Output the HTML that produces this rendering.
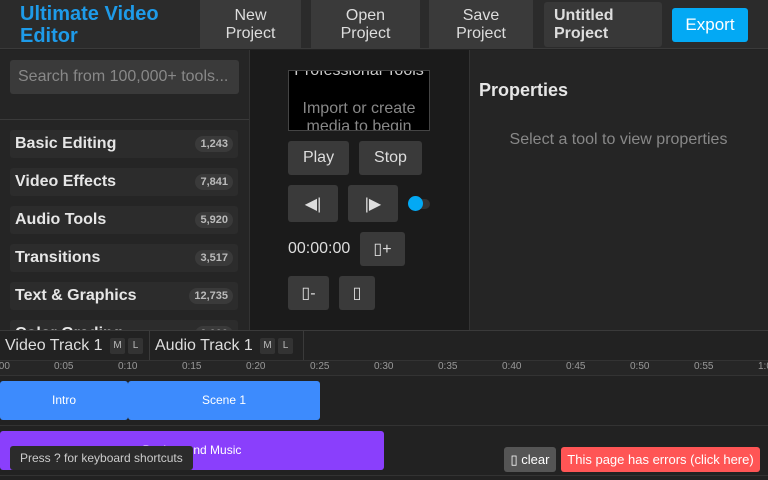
<!DOCTYPE html>
<html><head><style>
*{box-sizing:border-box;margin:0;padding:0}
body{width:768px;height:480px;overflow:hidden;background:#222;font-family:"Liberation Sans",sans-serif;color:#ddd;position:relative}
.a{position:absolute}
.hb{background:#3a3a3a;color:#ddd;font-size:16px;text-align:center;line-height:18px;display:flex;align-items:center;justify-content:center}
.cat{position:absolute;left:10px;width:228px;height:28px;background:#2c2c2c;border-radius:3px;font-weight:bold;font-size:16px;color:#e6e6e6;padding-left:5px;line-height:28px}
.cat span{position:absolute;right:5px;top:6px;height:16px;line-height:16px;font-size:11px;background:#3a3a3a;color:#bbb;border-radius:8px;padding:0 5px;font-weight:bold}
.btn{position:absolute;background:#3a3a3a;border-radius:3px;color:#ddd;font-size:16px;display:flex;align-items:center;justify-content:center}
.tk{position:absolute;top:361px;font-size:10px;color:#999}
.ml{position:absolute;top:7px;width:15px;height:16px;background:#333;font-size:10px;line-height:16px;text-align:center;color:#bbb;border-radius:2px}
</style></head><body>
<div class="a" style="left:0;top:0;width:768px;height:49px;background:#2b2b2b;border-bottom:1px solid #3a3a3a"></div>
<div class="a" style="left:20px;top:3px;font-size:20px;font-weight:bold;color:#1e9be9;line-height:22px">Ultimate Video<br>Editor</div>
<div class="a hb" style="left:200px;top:0;width:101px;height:49px">New<br>Project</div>
<div class="a hb" style="left:311px;top:0;width:109px;height:49px">Open<br>Project</div>
<div class="a hb" style="left:429px;top:0;width:104px;height:49px">Save<br>Project</div>
<div class="a" style="left:544px;top:2px;width:118px;height:45px;background:#383838;border-radius:3px;font-weight:bold;font-size:16px;line-height:18px;padding:5px 10px;color:#ddd">Untitled<br>Project</div>
<div class="a" style="left:672px;top:8px;width:76px;height:34px;background:#03a9f4;border-radius:3px;color:#fff;font-size:17px;line-height:34px;text-align:center">Export</div>

<div class="a" style="left:0;top:50px;width:250px;height:280px;background:#252525;border-right:1px solid #333"></div>
<div class="a" style="left:10px;top:60px;width:229px;height:34px;background:#3a3a3a;border-radius:3px;color:#888;font-size:16px;line-height:34px;padding-left:8px">Search from 100,000+ tools...</div>
<div class="a" style="left:0;top:119px;width:249px;height:1px;background:#3a3a3a"></div>
<div class="a" style="left:0;top:120px;width:249px;height:210px;overflow:hidden">
<div class="cat" style="top:10px">Basic Editing<span>1,243</span></div>
<div class="cat" style="top:48px">Video Effects<span>7,841</span></div>
<div class="cat" style="top:86px">Audio Tools<span>5,920</span></div>
<div class="cat" style="top:124px">Transitions<span>3,517</span></div>
<div class="cat" style="top:162px">Text &amp; Graphics<span>12,735</span></div>
<div class="cat" style="top:200px">Color Grading<span>9,000</span></div>
</div>

<div class="a" style="left:250px;top:50px;width:219px;height:280px;background:#1b1b1b"></div>
<div class="a" style="left:288px;top:70px;width:142px;height:61px;background:#000;border:1px solid #444;overflow:hidden;text-align:center;color:#888;font-size:16px;line-height:18px">
<div style="margin-top:-9px;color:#ccc">Professional Tools</div><div style="margin-top:20px">Import or create<br>media to begin</div></div>
<div class="btn" style="left:288px;top:141px;width:61px;height:34px">Play</div>
<div class="btn" style="left:359px;top:141px;width:63px;height:34px">Stop</div>
<div class="btn" style="left:288px;top:185px;width:50px;height:37px">◀|</div>
<div class="btn" style="left:348px;top:185px;width:50px;height:37px">|▶</div>
<div class="a" style="left:412px;top:199px;width:18px;height:10px;background:#333;border-radius:5px"></div>
<div class="a" style="left:408px;top:196px;width:15px;height:15px;background:#03a9f4;border-radius:50%"></div>
<div class="a" style="left:288px;top:240px;font-size:16px;color:#ddd">00:00:00</div>
<div class="btn" style="left:360px;top:232px;width:45px;height:34px">▯+</div>
<div class="btn" style="left:288px;top:276px;width:41px;height:34px">▯-</div>
<div class="btn" style="left:339px;top:276px;width:36px;height:34px">▯</div>

<div class="a" style="left:469px;top:50px;width:299px;height:280px;background:#252525;border-left:1px solid #333"></div>
<div class="a" style="left:479px;top:80px;font-size:18px;font-weight:bold;color:#e6e6e6">Properties</div>
<div class="a" style="left:469px;top:131px;width:299px;text-align:center;font-size:16px;color:#888">Select a tool to view properties</div>

<div class="a" style="left:0;top:330px;width:768px;height:150px;background:#222;border-top:1px solid #3a3a3a"></div>
<div class="a" style="left:0;top:331px;width:150px;height:29px;border-right:1px solid #3a3a3a;font-size:16px;line-height:29px;padding-left:5px">Video Track 1<span class="ml" style="left:110px">M</span><span class="ml" style="left:128px">L</span></div>
<div class="a" style="left:150px;top:331px;width:154px;height:29px;border-right:1px solid #3a3a3a;font-size:16px;line-height:29px;padding-left:5px">Audio Track 1<span class="ml" style="left:110px">M</span><span class="ml" style="left:128px">L</span></div>
<div class="a" style="left:0;top:360px;width:768px;height:16px;background:#262626;border-top:1px solid #333;border-bottom:1px solid #333"></div>
<div class="tk" style="left:-4px">:00</div><div class="tk" style="left:54px">0:05</div><div class="tk" style="left:118px">0:10</div><div class="tk" style="left:182px">0:15</div><div class="tk" style="left:246px">0:20</div><div class="tk" style="left:310px">0:25</div><div class="tk" style="left:374px">0:30</div><div class="tk" style="left:438px">0:35</div><div class="tk" style="left:502px">0:40</div><div class="tk" style="left:566px">0:45</div><div class="tk" style="left:630px">0:50</div><div class="tk" style="left:694px">0:55</div><div class="tk" style="left:758px">1:00</div>
<div class="a" style="left:0;top:381px;width:128px;height:39px;background:#3d8bfd;border-radius:3px;color:#fff;font-size:12px;line-height:39px;text-align:center">Intro</div>
<div class="a" style="left:128px;top:381px;width:192px;height:39px;background:#3d8bfd;border-radius:3px;color:#fff;font-size:12px;line-height:39px;text-align:center">Scene 1</div>
<div class="a" style="left:0;top:425px;width:768px;height:1px;background:#333"></div>
<div class="a" style="left:0;top:431px;width:384px;height:39px;background:#8a3ffc;border-radius:3px;color:#fff;font-size:12px;line-height:39px;text-align:center">Background Music</div>
<div class="a" style="left:0;top:475px;width:768px;height:1px;background:#333"></div>
<div class="a" style="left:10px;top:446px;width:183px;height:24px;background:#2b2b2b;color:#ccc;font-size:12px;line-height:24px;padding-left:10px;border-radius:3px">Press ? for keyboard shortcuts</div>
<div class="a" style="left:504px;top:447px;width:52px;height:25px;background:#555;color:#fff;font-size:13px;line-height:25px;text-align:center;border-radius:3px">▯ clear</div>
<div class="a" style="left:561px;top:447px;width:199px;height:25px;background:#f55;color:#fff;font-size:13px;line-height:25px;text-align:center;border-radius:3px">This page has errors (click here)</div>
</body></html>
